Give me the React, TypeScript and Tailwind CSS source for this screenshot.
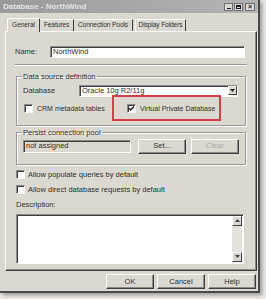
function Check({ checked }: { checked?: boolean }) {
  return (
    <span className="w-[9px] h-[9px] shrink-0 bg-white border-t border-l border-[#8a8a8a] border-r border-b border-r-[#f4f4f4] border-b-[#f4f4f4] shadow-[inset_1px_1px_0_#404040] flex items-center justify-center">
      {checked && (
        <svg width="7" height="7" viewBox="0 0 7 7">
          <path d="M1 3.2 L2.8 5 L6 1.6" stroke="#202020" strokeWidth="1.4" fill="none" />
        </svg>
      )}
    </span>
  );
}

function Btn({ label, disabled, w }: { label: string; disabled?: boolean; w: string }) {
  return (
    <div
      className={`${w} h-[15px] flex items-center justify-center border border-t-white border-l-white border-r-[#404040] border-b-[#404040] shadow-[inset_-1px_-1px_0_#8a8a8a] ${
        disabled ? "text-[#a8a8a8]" : "text-[#303030]"
      }`}
    >
      {label}
    </div>
  );
}

function Sunken({ className, children }: { className: string; children?: React.ReactNode }) {
  return (
    <div
      className={`border border-t-[#8a8a8a] border-l-[#8a8a8a] border-r-white border-b-white shadow-[inset_1px_1px_0_#404040] ${className}`}
    >
      {children}
    </div>
  );
}

export default function App() {
  return (
    <div className="w-[266px] h-[299px] bg-[#e9e8e4] overflow-hidden text-[7.5px] leading-none text-[#303030] font-['Liberation_Sans',Arial,sans-serif]">
      <div className="w-[260px] h-[293px] bg-[#dbd8d2] border-r-2 border-b-2 border-[#4a4a4a] shadow-[2px_2px_4px_rgba(0,0,0,0.35)] flex flex-col">
        {/* title bar */}
        <div className="h-[13px] bg-gradient-to-r from-[#9a9a9a] to-[#b4b4b4] flex items-center pl-[3px] pr-[3px]">
          <span className="font-bold text-[#e2e2e2] text-[8px]">Database - NorthWind</span>
          <div className="ml-auto flex gap-[1px]">
            <div className="w-[9px] h-[8px] bg-[#d8d6d0] border border-[#707070] flex items-end justify-center pb-[1px]">
              <div className="w-[4px] h-[1px] bg-[#202020]" />
            </div>
            <div className="w-[9px] h-[8px] bg-[#d8d6d0] border border-[#707070] flex items-center justify-center">
              <div className="w-[5px] h-[4px] border border-t-2 border-[#202020]" />
            </div>
            <div className="w-[10px] h-[8px] ml-[1px] bg-[#d8d6d0] border border-[#707070] flex items-center justify-center text-[7px] font-bold text-[#202020]">
              ×
            </div>
          </div>
        </div>

        {/* tabs */}
        <div className="flex items-end pl-[7px] mt-[4px] h-[14px] text-[6.6px] tracking-[-0.1px]">
          <div className="h-[14px] w-[33px] flex items-center justify-center bg-[#dbd8d2] border-t border-l border-white border-r border-r-[#404040] rounded-t-[1px] relative z-10 -mb-[1px]">
            General
          </div>
          <div className="h-[12px] w-[34px] flex items-center justify-center border-t border-white border-r border-r-[#404040]">
            Features
          </div>
          <div className="h-[12px] w-[59px] flex items-center justify-center border-t border-white border-r border-r-[#404040]">
            Connection Pools
          </div>
          <div className="h-[12px] w-[51px] ml-[2px] flex items-center justify-center border-t border-l border-white border-r border-r-[#404040]">
            Display Folders
          </div>
        </div>

        {/* panel */}
        <div className="ml-[5px] w-[252px] h-[240px] border border-t-white border-l-white border-r-[#404040] border-b-[#404040] shadow-[inset_-1px_-1px_0_#8a8a8a] px-[9px] flex flex-col">
          <div className="flex items-center mt-[14px]">
            <span className="w-[35px]">Name:</span>
            <Sunken className="w-[195px] h-[12px] bg-white flex items-center pl-[2px]">NorthWind</Sunken>
          </div>

          <div className="mt-[6px] border-t border-[#9a9a9a] border-b border-b-white" />

          <fieldset className="relative mt-[7px] ml-[1px] w-[230px] h-[53px] border border-[#9a9a9a] shadow-[1px_1px_0_white,inset_1px_1px_0_white] px-[6px]">
            <legend className="px-[1px] ml-[-1px]">Data source definition</legend>
            <div className="flex items-center mt-[4px]">
              <span className="w-[56px]">Database</span>
              <Sunken className="w-[159px] h-[12px] bg-white flex items-center pl-[2px]">
                <span>Oracle 10g R2/11g</span>
                <div className="ml-auto w-[9px] h-[9px] bg-[#dbd8d2] border border-t-white border-l-white border-r-[#404040] border-b-[#404040] flex items-center justify-center">
                  <svg width="5" height="3" viewBox="0 0 5 3">
                    <path d="M0 0 H5 L2.5 3 Z" fill="#202020" />
                  </svg>
                </div>
              </Sunken>
            </div>
            <div className="flex items-center mt-[7px] text-[7px]">
              <div className="flex items-center gap-[4px] w-[103px] ml-[1px]">
                <Check />
                <span>CRM metadata tables</span>
              </div>
              <div className="flex items-center gap-[4px]">
                <Check checked />
                <span>Virtual Private Database</span>
              </div>
            </div>
            <div className="absolute left-[95px] top-[14px] w-[109px] h-[26px] border-2 border-[#d4404a]" />
          </fieldset>

          <fieldset className="mt-[3px] ml-[1px] w-[228px] h-[36px] border border-[#9a9a9a] shadow-[1px_1px_0_white,inset_1px_1px_0_white] pl-[6px] pr-[6px]">
            <legend className="px-[1px] ml-[-1px]">Persist connection pool</legend>
            <div className="flex items-center mt-[2px]">
              <Sunken className="w-[108px] h-[13px] bg-[#dbd8d2] flex items-center pl-[2px]">not assigned</Sunken>
              <div className="ml-[7px]">
                <Btn label="Set..." w="w-[48px]" />
              </div>
              <div className="ml-[5px]">
                <Btn label="Clear" w="w-[48px]" disabled />
              </div>
            </div>
          </fieldset>

          <div className="flex items-center gap-[3px] mt-[5px] ml-[1px]">
            <Check />
            <span>Allow populate queries by default</span>
          </div>
          <div className="flex items-center gap-[3px] mt-[6px] ml-[1px]">
            <Check />
            <span>Allow direct database requests by default</span>
          </div>
          <div className="mt-[7px] ml-[1px]">Description:</div>

          <Sunken className="mt-[5px] ml-[1px] w-[228px] h-[50px] bg-white flex justify-end p-[1px]">
            <div className="w-[10px] h-full bg-[#e4e2dc] flex flex-col justify-between">
              <div className="w-[10px] h-[10px] bg-[#dbd8d2] border border-t-white border-l-white border-r-[#404040] border-b-[#404040] flex items-center justify-center">
                <svg width="5" height="3" viewBox="0 0 5 3">
                  <path d="M0 3 H5 L2.5 0 Z" fill="#404040" />
                </svg>
              </div>
              <div className="w-[10px] h-[10px] bg-[#dbd8d2] border border-t-white border-l-white border-r-[#404040] border-b-[#404040] flex items-center justify-center">
                <svg width="5" height="3" viewBox="0 0 5 3">
                  <path d="M0 0 H5 L2.5 3 Z" fill="#404040" />
                </svg>
              </div>
            </div>
          </Sunken>
        </div>

        {/* buttons */}
        <div className="flex justify-end gap-[3px] mt-[3px] pr-[2px]">
          <Btn label="OK" w="w-[48px]" />
          <Btn label="Cancel" w="w-[48px]" />
          <Btn label="Help" w="w-[48px]" />
        </div>
      </div>
    </div>
  );
}
